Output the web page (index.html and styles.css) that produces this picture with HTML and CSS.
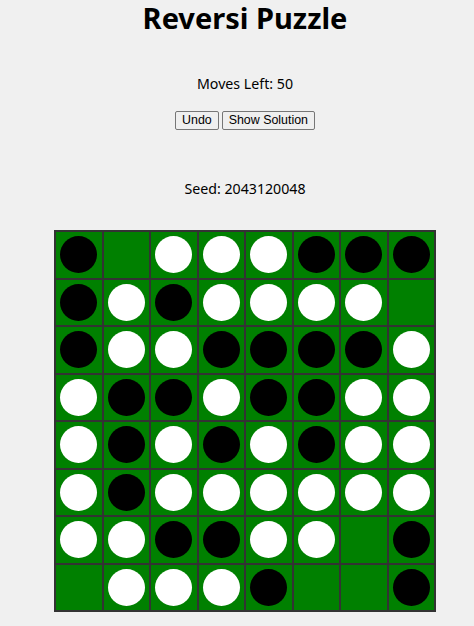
FILE: index.html
```html
<!DOCTYPE html>
<html>
<head>
<meta charset="utf-8">
<title>Reversi Puzzle</title>
<link rel="stylesheet" href="styles.css">
</head>
<body>
<main class="page">
  <h1 class="title">Reversi Puzzle</h1>
  <p class="moves">Moves Left: 50</p>
  <div class="controls">
    <button class="btn">Undo</button>
    <button class="btn">Show Solution</button>
  </div>
  <p class="seed">Seed: 2043120048</p>
  <div class="board">
    <div class="cell"><span class="disc black"></span></div>
    <div class="cell"></div>
    <div class="cell"><span class="disc white"></span></div>
    <div class="cell"><span class="disc white"></span></div>
    <div class="cell"><span class="disc white"></span></div>
    <div class="cell"><span class="disc black"></span></div>
    <div class="cell"><span class="disc black"></span></div>
    <div class="cell"><span class="disc black"></span></div>

    <div class="cell"><span class="disc black"></span></div>
    <div class="cell"><span class="disc white"></span></div>
    <div class="cell"><span class="disc black"></span></div>
    <div class="cell"><span class="disc white"></span></div>
    <div class="cell"><span class="disc white"></span></div>
    <div class="cell"><span class="disc white"></span></div>
    <div class="cell"><span class="disc white"></span></div>
    <div class="cell"></div>

    <div class="cell"><span class="disc black"></span></div>
    <div class="cell"><span class="disc white"></span></div>
    <div class="cell"><span class="disc white"></span></div>
    <div class="cell"><span class="disc black"></span></div>
    <div class="cell"><span class="disc black"></span></div>
    <div class="cell"><span class="disc black"></span></div>
    <div class="cell"><span class="disc black"></span></div>
    <div class="cell"><span class="disc white"></span></div>

    <div class="cell"><span class="disc white"></span></div>
    <div class="cell"><span class="disc black"></span></div>
    <div class="cell"><span class="disc black"></span></div>
    <div class="cell"><span class="disc white"></span></div>
    <div class="cell"><span class="disc black"></span></div>
    <div class="cell"><span class="disc black"></span></div>
    <div class="cell"><span class="disc white"></span></div>
    <div class="cell"><span class="disc white"></span></div>

    <div class="cell"><span class="disc white"></span></div>
    <div class="cell"><span class="disc black"></span></div>
    <div class="cell"><span class="disc white"></span></div>
    <div class="cell"><span class="disc black"></span></div>
    <div class="cell"><span class="disc white"></span></div>
    <div class="cell"><span class="disc black"></span></div>
    <div class="cell"><span class="disc white"></span></div>
    <div class="cell"><span class="disc white"></span></div>

    <div class="cell"><span class="disc white"></span></div>
    <div class="cell"><span class="disc black"></span></div>
    <div class="cell"><span class="disc white"></span></div>
    <div class="cell"><span class="disc white"></span></div>
    <div class="cell"><span class="disc white"></span></div>
    <div class="cell"><span class="disc white"></span></div>
    <div class="cell"><span class="disc white"></span></div>
    <div class="cell"><span class="disc white"></span></div>

    <div class="cell"><span class="disc white"></span></div>
    <div class="cell"><span class="disc white"></span></div>
    <div class="cell"><span class="disc black"></span></div>
    <div class="cell"><span class="disc black"></span></div>
    <div class="cell"><span class="disc white"></span></div>
    <div class="cell"><span class="disc white"></span></div>
    <div class="cell"></div>
    <div class="cell"><span class="disc black"></span></div>

    <div class="cell"></div>
    <div class="cell"><span class="disc white"></span></div>
    <div class="cell"><span class="disc white"></span></div>
    <div class="cell"><span class="disc white"></span></div>
    <div class="cell"><span class="disc black"></span></div>
    <div class="cell"></div>
    <div class="cell"></div>
    <div class="cell"><span class="disc black"></span></div>
  </div>
</main>
</body>
</html>
```

FILE: styles.css
```css
html, body {
  margin: 0;
  padding: 0;
}

body {
  background: #f0f0f0;
  color: #000;
  font-family: "Noto Sans", "Open Sans", sans-serif;
  padding-left: 16px;
}

.page {
  display: flex;
  flex-direction: column;
  align-items: center;
}

.title {
  margin: 0;
  font-size: 29px;
  line-height: 36px;
  font-weight: 700;
}

.moves {
  margin: 38px 0 0;
  font-size: 14.2px;
  line-height: 20px;
}

.controls {
  margin-top: 17px;
  display: flex;
  gap: 3px;
}

.btn {
  font-family: "Liberation Sans", Arial, sans-serif;
  font-size: 12.4px;
  line-height: 15px;
  padding: 1px 6px;
  background: #efefef;
  color: #000;
  border: 1px solid #767676;
  border-radius: 2px;
}

.seed {
  margin: 49px 0 0;
  font-size: 14.2px;
  line-height: 20px;
}

.board {
  margin-top: 31px;
  width: 382px;
  height: 382px;
  box-sizing: border-box;
  border: 1px solid #333;
  display: grid;
  grid-template-columns: repeat(8, 1fr);
  grid-template-rows: repeat(8, 1fr);
}

.cell {
  background: #008000;
  border: 1px solid #333;
  display: flex;
  align-items: center;
  justify-content: center;
}

.disc {
  width: 37px;
  height: 37px;
  border-radius: 50%;
}

.black {
  background: #000;
}

.white {
  background: #fff;
}
```
